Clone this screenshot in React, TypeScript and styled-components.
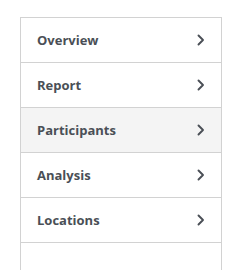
import React from 'react'
import styled, { createGlobalStyle } from 'styled-components';

const GlobalStyle = createGlobalStyle`
    body {
        margin: 0;
        background: #ffffff;
        font-family: "Open Sans", "Liberation Sans", sans-serif;
    }
`

const Menu = styled.ul`
    list-style: none;
    margin: 17px 0 0 20px;
    padding: 0;
    width: 200px;
    min-height: 253px;
    border: 1px solid #d2d2d2;
    border-bottom: none;
`

const MenuItem = styled.li<{ $active?: boolean }>`
    display: flex;
    align-items: center;
    justify-content: space-between;
    height: 44px;
    padding: 0 16px 0 16px;
    border-bottom: 1px solid #d2d2d2;
    background: ${p => (p.$active ? '#f4f4f4' : '#ffffff')};
    cursor: pointer;
`

const MenuText = styled.span`
    font-size: 13px;
    font-weight: 700;
    color: #4a4f56;
`

const Chevron = () => (
    <svg width="8" height="12" viewBox="0 0 8 12">
        <path d="M1.5 1.5 L6 6 L1.5 10.5" fill="none" stroke="#4a4f56" strokeWidth="1.9" strokeLinecap="round" strokeLinejoin="round" />
    </svg>
)

const items = [
    { id: 1, label: 'Overview' },
    { id: 2, label: 'Report' },
    { id: 3, label: 'Participants', active: true },
    { id: 4, label: 'Analysis' },
    { id: 5, label: 'Locations' },
]

export default function App() {
    return (
        <>
            <GlobalStyle />
            <Menu>
                {items.map(item => (
                    <MenuItem key={item.id} $active={item.active}>
                        <MenuText>{item.label}</MenuText>
                        <Chevron />
                    </MenuItem>
                ))}
            </Menu>
        </>
    )
}
